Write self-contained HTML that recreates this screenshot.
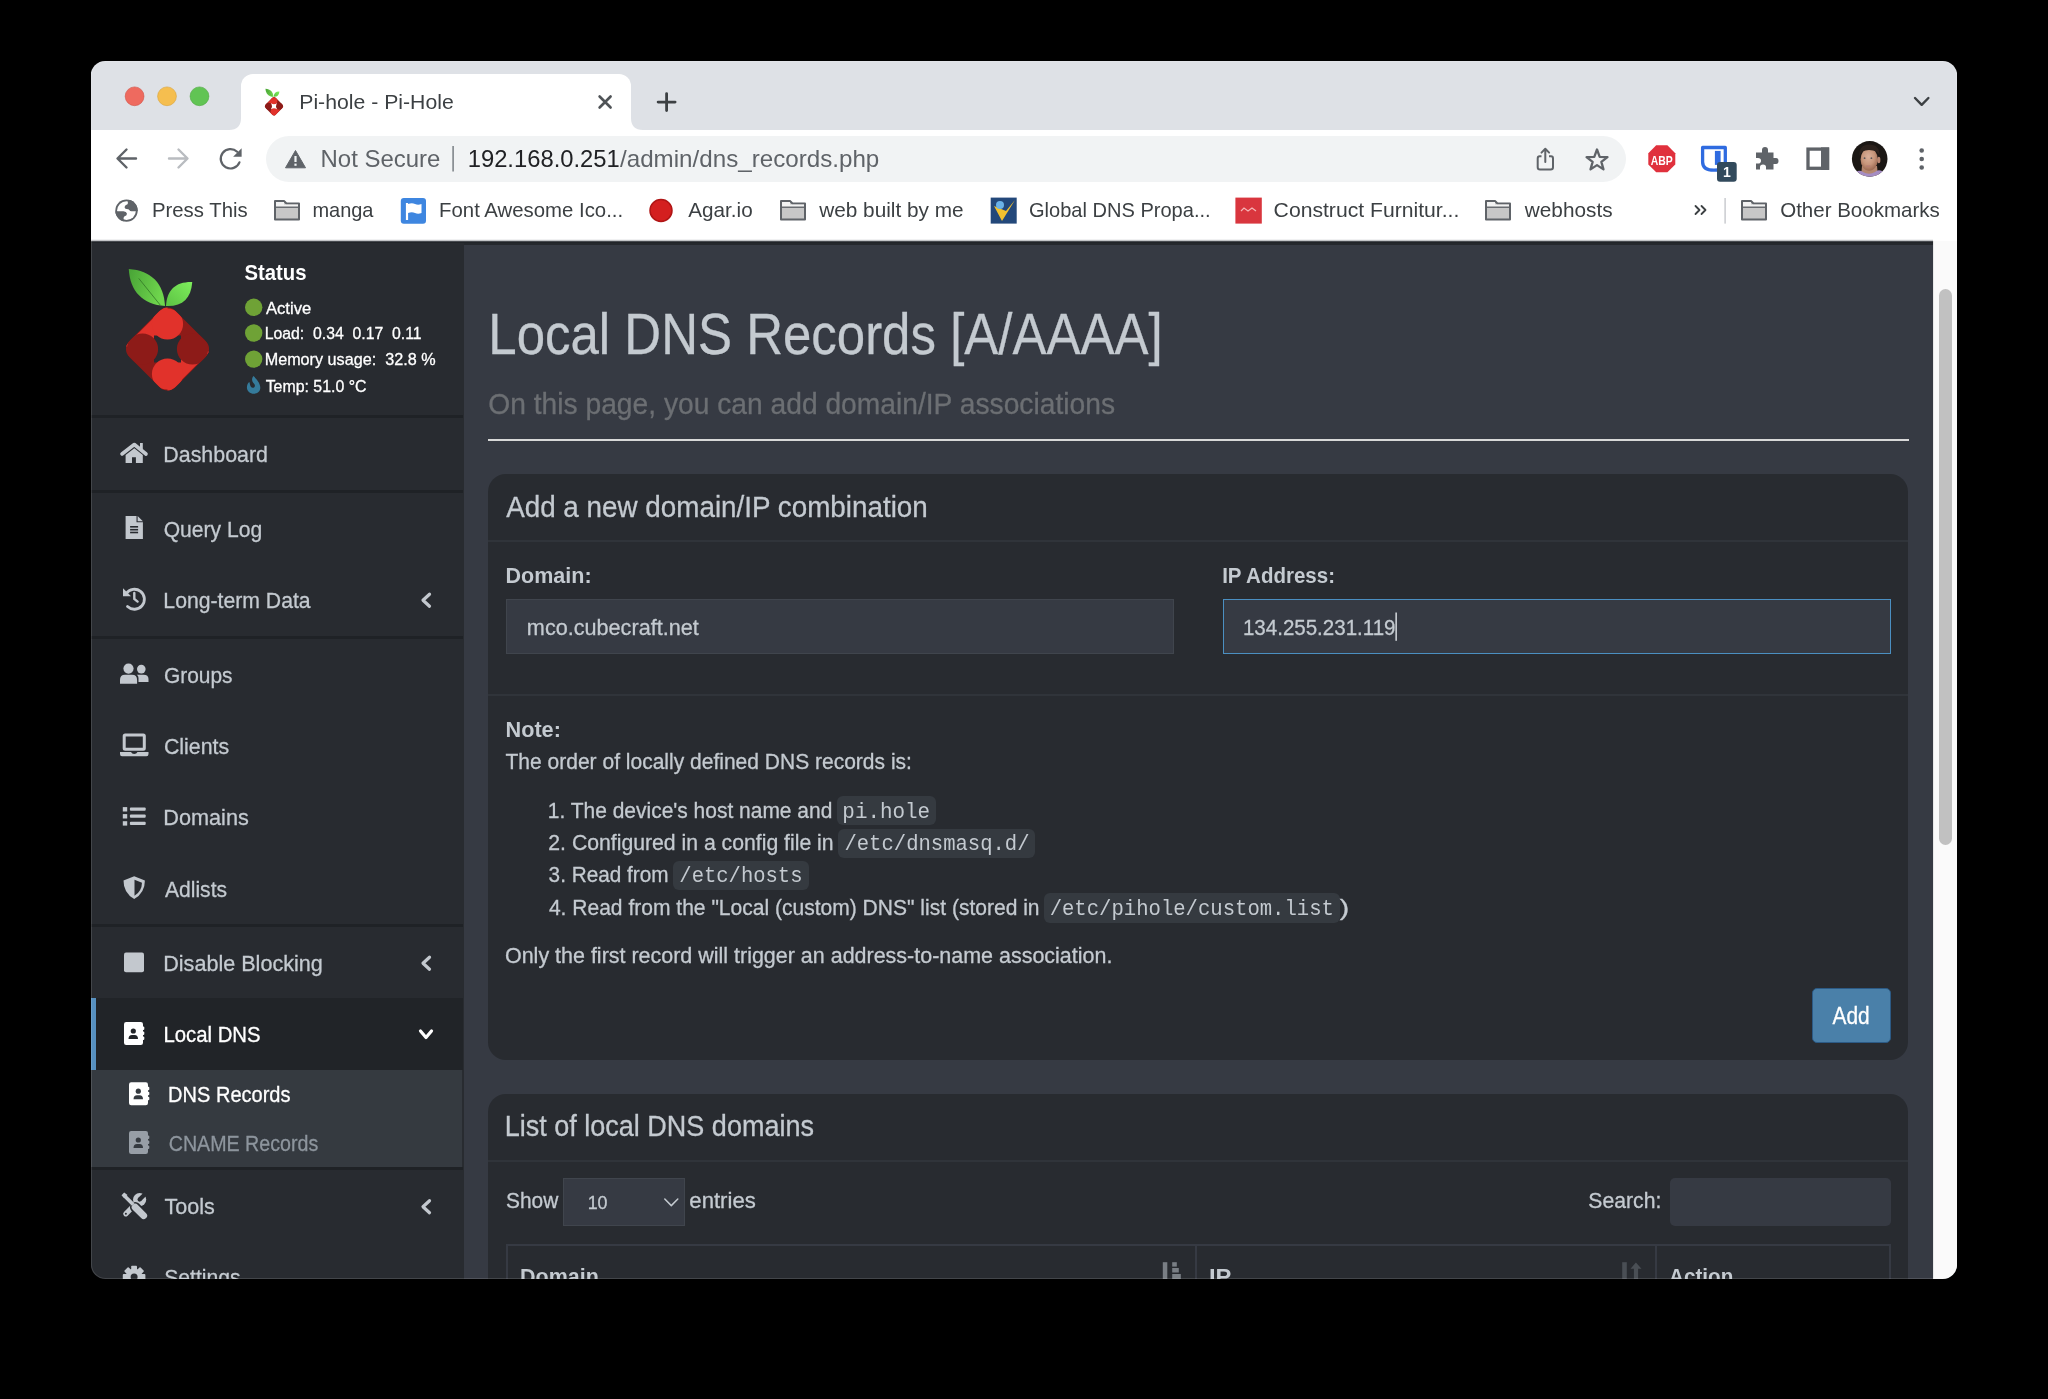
<!DOCTYPE html>
<html><head><meta charset="utf-8"><title>Pi-hole - Pi-Hole</title>
<style>
html,body{margin:0;padding:0;width:2048px;height:1399px;overflow:hidden;background:#000;}
#win{position:absolute;left:91px;top:61px;width:1866px;height:1218px;border-radius:12px;overflow:hidden;}
#stage{position:absolute;left:0;top:0;width:2048px;height:1399px;clip-path:inset(61px 90.8px 120px 90.7px round 14.5px);}
#stage>div{position:absolute;}
svg{position:absolute;left:0;top:0;will-change:transform;}
</style></head><body>
<div id="stage">
<div style="left:91px;top:61px;width:1866px;height:69px;background:#dee1e6;"></div>
<div style="left:241px;top:74px;width:390px;height:56px;background:#ffffff;border-radius:12px 12px 0 0"></div>
<div style="left:91px;top:130px;width:1866px;height:111px;background:#ffffff;"></div>
<div style="left:266px;top:136px;width:1360px;height:46px;background:#f1f3f4;border-radius:23px"></div>
<div style="left:91px;top:241px;width:1866px;height:1038px;background:#282b30;"></div>
<div style="left:91px;top:241px;width:1842px;height:2px;background:#212428;"></div>
<div style="left:464px;top:243px;width:1469px;height:2.3px;background:#25282d;"></div>
<div style="left:91px;top:239px;width:1842px;height:3px;background:linear-gradient(#ffffff, #d8d9db 45%, #5a5d62 75%, #23262b);"></div>
<div style="left:464px;top:245px;width:1469px;height:1034px;background:#363a43;"></div>
<div style="left:1933px;top:241px;width:24px;height:1038px;background:#fafafa;border-left:1px solid #e8e8e8;box-sizing:border-box"></div>
<div style="left:1939.3px;top:289px;width:13px;height:556px;background:#c1c1c1;border-radius:6.5px"></div>
<div style="left:91px;top:415px;width:372px;height:3px;background:#1f2226;"></div>
<div style="left:91px;top:490px;width:372px;height:3px;background:#1f2226;"></div>
<div style="left:91px;top:636px;width:372px;height:3px;background:#1f2226;"></div>
<div style="left:91px;top:924px;width:372px;height:3px;background:#1f2226;"></div>
<div style="left:91px;top:998px;width:372px;height:72px;background:#212428;"></div>
<div style="left:91px;top:998px;width:5px;height:72px;background:#5690c0;"></div>
<div style="left:91px;top:1070px;width:371px;height:97px;background:#353a40;"></div>
<div style="left:91px;top:1167px;width:372px;height:3px;background:#1f2226;"></div>
<div style="left:488px;top:439px;width:1421px;height:2px;background:#d8d8d8;"></div>
<div style="left:488px;top:474px;width:1420px;height:586px;background:#282b30;border-radius:18px"></div>
<div style="left:488px;top:540px;width:1420px;height:2px;background:#30343a;"></div>
<div style="left:488px;top:694px;width:1420px;height:2px;background:#30343a;"></div>
<div style="left:506px;top:599px;width:668px;height:55px;background:#363a43;border:1px solid #40454d;box-sizing:border-box"></div>
<div style="left:1223px;top:599px;width:668px;height:55px;background:#363a43;border:1.6px solid #4b8fc1;box-sizing:border-box"></div>
<div style="left:837px;top:796.2px;width:99px;height:29.3px;background:#353a40;border-radius:6px"></div>
<div style="left:838.4px;top:829px;width:197px;height:29.3px;background:#353a40;border-radius:6px"></div>
<div style="left:673.3px;top:861px;width:136px;height:29.3px;background:#353a40;border-radius:6px"></div>
<div style="left:1043.6px;top:893.4px;width:296px;height:29.3px;background:#353a40;border-radius:6px"></div>
<div style="left:1812px;top:988px;width:79px;height:55px;background:#4a80a9;border:1.5px solid #2c5a85;box-sizing:border-box;border-radius:5px"></div>
<div style="left:488px;top:1094px;width:1420px;height:400px;background:#282b30;border-radius:18px"></div>
<div style="left:488px;top:1160px;width:1420px;height:2px;background:#30343a;"></div>
<div style="left:563px;top:1178px;width:122px;height:48px;background:#363a43;border:1px solid #40454d;box-sizing:border-box"></div>
<div style="left:1670px;top:1178px;width:221px;height:48px;background:#363a43;border-radius:5px"></div>
<div style="left:506px;top:1244px;width:1385px;height:2px;background:#363a43;"></div>
<div style="left:506px;top:1244px;width:2px;height:60px;background:#363a43;"></div>
<div style="left:1195px;top:1244px;width:2px;height:60px;background:#363a43;"></div>
<div style="left:1655px;top:1244px;width:2px;height:60px;background:#363a43;"></div>
<div style="left:1889px;top:1244px;width:2px;height:60px;background:#363a43;"></div>
<div style="left:91px;top:61px;width:1866px;height:1218px;border-radius:14.5px;box-shadow:inset 0 0 0 1px rgba(255,255,255,0.13);z-index:5"></div>
<svg width="2048" height="1399" viewBox="0 0 2048 1399">
<path d="M229 130 Q241 130 241 118 L241 130 Z" fill="#fff"/>
<path d="M643 130 Q631 130 631 118 L631 130 Z" fill="#fff"/>
<text x="299.26" y="108.8" textLength="154.48" lengthAdjust="spacingAndGlyphs" font-family="Liberation Sans" font-size="20.93" fill="#3c4043" font-weight="400" style="white-space:pre">Pi-hole - Pi-Hole</text>
<text x="320.53" y="167" textLength="119.83" lengthAdjust="spacingAndGlyphs" font-family="Liberation Sans" font-size="23.40" fill="#5f6368" font-weight="400" style="white-space:pre">Not Secure</text>
<text x="467.69" y="167" textLength="152.07" lengthAdjust="spacingAndGlyphs" font-family="Liberation Sans" font-size="23.40" fill="#202124" font-weight="400" style="white-space:pre">192.168.0.251</text>
<text x="620.00" y="167" textLength="259.32" lengthAdjust="spacingAndGlyphs" font-family="Liberation Sans" font-size="23.40" fill="#5f6368" font-weight="400" style="white-space:pre">/admin/dns_records.php</text>
<text x="151.93" y="216.9" textLength="95.71" lengthAdjust="spacingAndGlyphs" font-family="Liberation Sans" font-size="19.99" fill="#3c4043" font-weight="400" style="white-space:pre">Press This</text>
<text x="312.42" y="216.9" textLength="61.08" lengthAdjust="spacingAndGlyphs" font-family="Liberation Sans" font-size="19.99" fill="#3c4043" font-weight="400" style="white-space:pre">manga</text>
<text x="439.08" y="216.9" textLength="184.08" lengthAdjust="spacingAndGlyphs" font-family="Liberation Sans" font-size="19.99" fill="#3c4043" font-weight="400" style="white-space:pre">Font Awesome Ico...</text>
<text x="688.26" y="216.9" textLength="64.41" lengthAdjust="spacingAndGlyphs" font-family="Liberation Sans" font-size="19.99" fill="#3c4043" font-weight="400" style="white-space:pre">Agar.io</text>
<text x="819.23" y="216.9" textLength="144.39" lengthAdjust="spacingAndGlyphs" font-family="Liberation Sans" font-size="19.99" fill="#3c4043" font-weight="400" style="white-space:pre">web built by me</text>
<text x="1028.99" y="216.9" textLength="181.64" lengthAdjust="spacingAndGlyphs" font-family="Liberation Sans" font-size="19.99" fill="#3c4043" font-weight="400" style="white-space:pre">Global DNS Propa...</text>
<text x="1273.63" y="216.9" textLength="185.71" lengthAdjust="spacingAndGlyphs" font-family="Liberation Sans" font-size="19.99" fill="#3c4043" font-weight="400" style="white-space:pre">Construct Furnitur...</text>
<text x="1524.83" y="216.9" textLength="87.72" lengthAdjust="spacingAndGlyphs" font-family="Liberation Sans" font-size="19.99" fill="#3c4043" font-weight="400" style="white-space:pre">webhosts</text>
<text x="1780.23" y="216.9" textLength="159.51" lengthAdjust="spacingAndGlyphs" font-family="Liberation Sans" font-size="19.99" fill="#3c4043" font-weight="400" style="white-space:pre">Other Bookmarks</text>
<text x="244.42" y="280.4" textLength="62.02" lengthAdjust="spacingAndGlyphs" font-family="Liberation Sans" font-size="21.80" fill="#ffffff" font-weight="700" style="white-space:pre">Status</text>
<text x="265.97" y="313.5" textLength="45.27" lengthAdjust="spacingAndGlyphs" font-family="Liberation Sans" font-size="16.35" fill="#ffffff" font-weight="400" stroke="#ffffff" stroke-width="0.3" style="white-space:pre">Active</text>
<text x="264.70" y="339.4" textLength="156.87" lengthAdjust="spacingAndGlyphs" font-family="Liberation Sans" font-size="16.35" fill="#ffffff" font-weight="400" stroke="#ffffff" stroke-width="0.3" style="white-space:pre">Load:  0.34  0.17  0.11</text>
<text x="264.67" y="364.8" textLength="170.91" lengthAdjust="spacingAndGlyphs" font-family="Liberation Sans" font-size="16.35" fill="#ffffff" font-weight="400" stroke="#ffffff" stroke-width="0.3" style="white-space:pre">Memory usage:  32.8 %</text>
<text x="265.64" y="391.8" textLength="100.96" lengthAdjust="spacingAndGlyphs" font-family="Liberation Sans" font-size="16.35" fill="#ffffff" font-weight="400" stroke="#ffffff" stroke-width="0.3" style="white-space:pre">Temp: 51.0 °C</text>
<text x="163.34" y="462.3" textLength="104.63" lengthAdjust="spacingAndGlyphs" font-family="Liberation Sans" font-size="22.53" fill="#c4cad0" font-weight="400" stroke="#c4cad0" stroke-width="0.3" style="white-space:pre">Dashboard</text>
<text x="163.70" y="536.9" textLength="98.46" lengthAdjust="spacingAndGlyphs" font-family="Liberation Sans" font-size="22.53" fill="#c4cad0" font-weight="400" stroke="#c4cad0" stroke-width="0.3" style="white-space:pre">Query Log</text>
<text x="163.36" y="608.1" textLength="147.24" lengthAdjust="spacingAndGlyphs" font-family="Liberation Sans" font-size="22.53" fill="#c4cad0" font-weight="400" stroke="#c4cad0" stroke-width="0.3" style="white-space:pre">Long-term Data</text>
<text x="163.95" y="682.7" textLength="68.61" lengthAdjust="spacingAndGlyphs" font-family="Liberation Sans" font-size="22.53" fill="#c4cad0" font-weight="400" stroke="#c4cad0" stroke-width="0.3" style="white-space:pre">Groups</text>
<text x="163.92" y="754" textLength="65.26" lengthAdjust="spacingAndGlyphs" font-family="Liberation Sans" font-size="22.53" fill="#c4cad0" font-weight="400" stroke="#c4cad0" stroke-width="0.3" style="white-space:pre">Clients</text>
<text x="163.22" y="825.2" textLength="85.56" lengthAdjust="spacingAndGlyphs" font-family="Liberation Sans" font-size="22.53" fill="#c4cad0" font-weight="400" stroke="#c4cad0" stroke-width="0.3" style="white-space:pre">Domains</text>
<text x="164.96" y="896.6" textLength="62.10" lengthAdjust="spacingAndGlyphs" font-family="Liberation Sans" font-size="22.53" fill="#c4cad0" font-weight="400" stroke="#c4cad0" stroke-width="0.3" style="white-space:pre">Adlists</text>
<text x="163.23" y="971.4" textLength="159.56" lengthAdjust="spacingAndGlyphs" font-family="Liberation Sans" font-size="22.53" fill="#c4cad0" font-weight="400" stroke="#c4cad0" stroke-width="0.3" style="white-space:pre">Disable Blocking</text>
<text x="163.43" y="1042.1" textLength="97.20" lengthAdjust="spacingAndGlyphs" font-family="Liberation Sans" font-size="22.53" fill="#ffffff" font-weight="400" stroke="#ffffff" stroke-width="0.3" style="white-space:pre">Local DNS</text>
<text x="168.06" y="1102" textLength="122.47" lengthAdjust="spacingAndGlyphs" font-family="Liberation Sans" font-size="22.53" fill="#ffffff" font-weight="400" stroke="#ffffff" stroke-width="0.3" style="white-space:pre">DNS Records</text>
<text x="168.70" y="1150.9" textLength="149.61" lengthAdjust="spacingAndGlyphs" font-family="Liberation Sans" font-size="22.53" fill="#8d959d" font-weight="400" stroke="#8d959d" stroke-width="0.3" style="white-space:pre">CNAME Records</text>
<text x="164.52" y="1214.1" textLength="50.26" lengthAdjust="spacingAndGlyphs" font-family="Liberation Sans" font-size="22.53" fill="#c4cad0" font-weight="400" stroke="#c4cad0" stroke-width="0.3" style="white-space:pre">Tools</text>
<text x="164.14" y="1284.5" textLength="76.53" lengthAdjust="spacingAndGlyphs" font-family="Liberation Sans" font-size="22.53" fill="#c4cad0" font-weight="400" stroke="#c4cad0" stroke-width="0.3" style="white-space:pre">Settings</text>
<text x="488.32" y="353.9" textLength="674.32" lengthAdjust="spacingAndGlyphs" font-family="Liberation Sans" font-size="56.98" fill="#c4cad0" font-weight="400" stroke="#c4cad0" stroke-width="0.3" style="white-space:pre">Local DNS Records [A/AAAA]</text>
<text x="488.26" y="414.2" textLength="626.76" lengthAdjust="spacingAndGlyphs" font-family="Liberation Sans" font-size="29.51" fill="#6c6f73" font-weight="400" stroke="#6c6f73" stroke-width="0.3" style="white-space:pre">On this page, you can add domain/IP associations</text>
<text x="506.15" y="516.8" textLength="421.66" lengthAdjust="spacingAndGlyphs" font-family="Liberation Sans" font-size="28.78" fill="#c4cad0" font-weight="400" stroke="#c4cad0" stroke-width="0.3" style="white-space:pre">Add a new domain/IP combination</text>
<text x="505.56" y="583.2" textLength="86.01" lengthAdjust="spacingAndGlyphs" font-family="Liberation Sans" font-size="21.66" fill="#c4cad0" font-weight="700" style="white-space:pre">Domain:</text>
<text x="1222.13" y="583.4" textLength="112.85" lengthAdjust="spacingAndGlyphs" font-family="Liberation Sans" font-size="21.66" fill="#c4cad0" font-weight="700" style="white-space:pre">IP Address:</text>
<text x="526.86" y="634.8" textLength="171.90" lengthAdjust="spacingAndGlyphs" font-family="Liberation Sans" font-size="22.38" fill="#c4cad0" font-weight="400" stroke="#c4cad0" stroke-width="0.3" style="white-space:pre">mco.cubecraft.net</text>
<text x="1242.94" y="634.8" textLength="152.54" lengthAdjust="spacingAndGlyphs" font-family="Liberation Sans" font-size="22.09" fill="#c4cad0" font-weight="400" stroke="#c4cad0" stroke-width="0.3" style="white-space:pre">134.255.231.119</text>
<text x="505.55" y="736.9" textLength="55.33" lengthAdjust="spacingAndGlyphs" font-family="Liberation Sans" font-size="21.66" fill="#c4cad0" font-weight="700" style="white-space:pre">Note:</text>
<text x="505.53" y="769.4" textLength="406.39" lengthAdjust="spacingAndGlyphs" font-family="Liberation Sans" font-size="21.37" fill="#c4cad0" font-weight="400" stroke="#c4cad0" stroke-width="0.3" style="white-space:pre">The order of locally defined DNS records is:</text>
<text x="547.80" y="818.2" textLength="284.55" lengthAdjust="spacingAndGlyphs" font-family="Liberation Sans" font-size="21.37" fill="#c4cad0" font-weight="400" stroke="#c4cad0" stroke-width="0.3" style="white-space:pre">1. The device&#x27;s host name and</text>
<text x="548.33" y="850.2" textLength="285.24" lengthAdjust="spacingAndGlyphs" font-family="Liberation Sans" font-size="21.37" fill="#c4cad0" font-weight="400" stroke="#c4cad0" stroke-width="0.3" style="white-space:pre">2. Configured in a config file in</text>
<text x="548.61" y="882.4" textLength="119.86" lengthAdjust="spacingAndGlyphs" font-family="Liberation Sans" font-size="21.37" fill="#c4cad0" font-weight="400" stroke="#c4cad0" stroke-width="0.3" style="white-space:pre">3. Read from</text>
<text x="548.92" y="914.6" textLength="490.65" lengthAdjust="spacingAndGlyphs" font-family="Liberation Sans" font-size="21.37" fill="#c4cad0" font-weight="400" stroke="#c4cad0" stroke-width="0.3" style="white-space:pre">4. Read from the &quot;Local (custom) DNS&quot; list (stored in</text>
<text x="504.98" y="963.4" textLength="607.38" lengthAdjust="spacingAndGlyphs" font-family="Liberation Sans" font-size="21.37" fill="#c4cad0" font-weight="400" stroke="#c4cad0" stroke-width="0.3" style="white-space:pre">Only the first record will trigger an address-to-name association.</text>
<text x="842.37" y="818.2" textLength="87.70" lengthAdjust="spacingAndGlyphs" font-family="Liberation Mono" font-size="22.76" fill="#c4cad0" font-weight="400" style="white-space:pre">pi.hole</text>
<text x="844.45" y="850.2" textLength="185.11" lengthAdjust="spacingAndGlyphs" font-family="Liberation Mono" font-size="22.76" fill="#c4cad0" font-weight="400" style="white-space:pre">/etc/dnsmasq.d/</text>
<text x="679.36" y="882.4" textLength="123.14" lengthAdjust="spacingAndGlyphs" font-family="Liberation Mono" font-size="22.76" fill="#c4cad0" font-weight="400" style="white-space:pre">/etc/hosts</text>
<text x="1049.65" y="914.6" textLength="284.28" lengthAdjust="spacingAndGlyphs" font-family="Liberation Mono" font-size="22.76" fill="#c4cad0" font-weight="400" style="white-space:pre">/etc/pihole/custom.list</text>
<text x="1339.83" y="914.6" textLength="9.42" lengthAdjust="spacingAndGlyphs" font-family="Liberation Sans" font-size="21.37" fill="#c4cad0" font-weight="400" stroke="#c4cad0" stroke-width="0.3" style="white-space:pre">)</text>
<text x="1832.46" y="1024" textLength="37.19" lengthAdjust="spacingAndGlyphs" font-family="Liberation Sans" font-size="24.42" fill="#ffffff" font-weight="400" stroke="#ffffff" stroke-width="0.3" style="white-space:pre">Add</text>
<text x="504.78" y="1136.3" textLength="309.19" lengthAdjust="spacingAndGlyphs" font-family="Liberation Sans" font-size="28.78" fill="#c4cad0" font-weight="400" stroke="#c4cad0" stroke-width="0.3" style="white-space:pre">List of local DNS domains</text>
<text x="506.05" y="1208" textLength="52.30" lengthAdjust="spacingAndGlyphs" font-family="Liberation Sans" font-size="21.37" fill="#c4cad0" font-weight="400" stroke="#c4cad0" stroke-width="0.3" style="white-space:pre">Show</text>
<text x="587.64" y="1209.2" textLength="19.86" lengthAdjust="spacingAndGlyphs" font-family="Liberation Sans" font-size="18.90" fill="#c4cad0" font-weight="400" stroke="#c4cad0" stroke-width="0.3" style="white-space:pre">10</text>
<text x="689.36" y="1208" textLength="66.44" lengthAdjust="spacingAndGlyphs" font-family="Liberation Sans" font-size="21.37" fill="#c4cad0" font-weight="400" stroke="#c4cad0" stroke-width="0.3" style="white-space:pre">entries</text>
<text x="1588.34" y="1208.4" textLength="73.00" lengthAdjust="spacingAndGlyphs" font-family="Liberation Sans" font-size="21.37" fill="#c4cad0" font-weight="400" stroke="#c4cad0" stroke-width="0.3" style="white-space:pre">Search:</text>
<text x="520.06" y="1283.5" textLength="78.77" lengthAdjust="spacingAndGlyphs" font-family="Liberation Sans" font-size="21.66" fill="#c4cad0" font-weight="700" style="white-space:pre">Domain</text>
<text x="1208.91" y="1283.5" textLength="22.40" lengthAdjust="spacingAndGlyphs" font-family="Liberation Sans" font-size="21.66" fill="#c4cad0" font-weight="700" style="white-space:pre">IP</text>
<text x="1668.98" y="1283.5" textLength="64.30" lengthAdjust="spacingAndGlyphs" font-family="Liberation Sans" font-size="21.66" fill="#c4cad0" font-weight="700" style="white-space:pre">Action</text>
<circle cx="134.6" cy="96.3" r="9.4" fill="#ee6a5f" stroke="#d25144" stroke-width="0.6"/>
<circle cx="167" cy="96.3" r="9.4" fill="#f5be4f" stroke="#d9a33a" stroke-width="0.6"/>
<circle cx="199.5" cy="96.3" r="9.4" fill="#61c454" stroke="#4ea83f" stroke-width="0.6"/>
<path d="M599.6 96.5 L610.6 107.5 M610.6 96.5 L599.6 107.5" stroke="#4f5357" stroke-width="2.6" stroke-linecap="round"/>
<path d="M666.6 93.6 L666.6 110.6 M658.1 102.1 L675.1 102.1" stroke="#3c4043" stroke-width="2.8" stroke-linecap="round"/>
<path d="M1915 98 L1921.7 104.8 L1928.4 98" fill="none" stroke="#3c4043" stroke-width="2.4" stroke-linecap="round" stroke-linejoin="round"/>
<path d="M136 158.5 L118 158.5 M126.5 149.5 L117.5 158.5 L126.5 167.5" fill="none" stroke="#5f6368" stroke-width="2.4" stroke-linecap="round" stroke-linejoin="round"/>
<path d="M169 158.5 L187 158.5 M178.5 149.5 L187.5 158.5 L178.5 167.5" fill="none" stroke="#b9bcc0" stroke-width="2.4" stroke-linecap="round" stroke-linejoin="round"/>
<path d="M237.14 151.72 A9.7 9.7 0 1 0 239.46 162.36" fill="none" stroke="#5f6368" stroke-width="2.2" stroke-linecap="round"/>
<path d="M241.6 148.3 L241.6 156.8 L233.1 156.8 Z" fill="#5f6368"/>
<path d="M295.5 150.5 L305.5 167.8 L285.5 167.8 Z" fill="#5f6368" stroke="#5f6368" stroke-width="1" stroke-linejoin="round"/>
<rect x="294.4" y="156" width="2.2" height="6" fill="#f1f3f4"/><rect x="294.4" y="163.6" width="2.2" height="2.2" fill="#f1f3f4"/>
<rect x="452.3" y="146" width="1.6" height="25.5" fill="#80868b"/>
<path d="M1541.5 156.3 L1539.7 156.3 Q1537.7 156.3 1537.7 158.5 L1537.7 167.3 Q1537.7 169.5 1540 169.5 L1550.7 169.5 Q1553 169.5 1553 167.3 L1553 158.5 Q1553 156.3 1551 156.3 L1549 156.3" fill="none" stroke="#5f6368" stroke-width="2" stroke-linejoin="round"/>
<path d="M1545.3 162 L1545.3 149.2 M1541.5 152.6 L1545.3 148.8 L1549.1 152.6" fill="none" stroke="#5f6368" stroke-width="2" stroke-linecap="round" stroke-linejoin="round"/>
<polygon points="1597.00,149.50 1599.70,156.78 1607.46,157.10 1601.37,161.92 1603.47,169.40 1597.00,165.10 1590.53,169.40 1592.63,161.92 1586.54,157.10 1594.30,156.78" fill="none" stroke="#5f6368" stroke-width="2.3" stroke-linejoin="round"/>
<polygon points="1675.29,164.39 1667.39,172.29 1656.21,172.29 1648.31,164.39 1648.31,153.21 1656.21,145.31 1667.39,145.31 1675.29,153.21" fill="#e0313d"/>
<text x="1661.8" y="164.5" text-anchor="middle" font-family="Liberation Sans" font-weight="700" font-size="13" fill="#fff" textLength="22" lengthAdjust="spacingAndGlyphs">ABP</text>
<path d="M1702.6 147.5 L1725.3 147.5 L1725.3 162 Q1725.3 170.2 1714 170.2 Q1702.6 170.2 1702.6 162 Z" fill="none" stroke="#2f6be0" stroke-width="3.3" stroke-linejoin="round"/>
<rect x="1714.9" y="150.9" width="5.7" height="14" fill="#2f6be0"/>
<rect x="1717" y="162" width="19.7" height="19.7" rx="3" fill="#324a5c"/>
<text x="1726.8" y="177" text-anchor="middle" font-family="Liberation Sans" font-weight="700" font-size="14" fill="#fff">1</text>
<path d="M1756 152.5 L1762 152.5 L1762 150 Q1762 147 1765 147 Q1768 147 1768 150 L1768 152.5 L1773.5 152.5 L1773.5 158 L1776 158 Q1778.5 158 1778.5 161 Q1778.5 164 1776 164 L1773.5 164 L1773.5 169.5 L1766 169.5 L1766 167 Q1766 164.5 1763 164.5 Q1760 164.5 1760 167 L1760 169.5 L1756 169.5 L1756 163.5 L1758 163.5 Q1761 163.5 1761 160.7 Q1761 158 1758 158 L1756 158 Z" fill="#5f6368"/>
<rect x="1808" y="149.1" width="19.5" height="19.2" fill="none" stroke="#5f6368" stroke-width="3.3"/>
<rect x="1821" y="147.4" width="8.2" height="22.5" fill="#5f6368"/>
<defs><clipPath id="avc"><circle cx="1869.7" cy="158.85" r="17.8"/></clipPath><radialGradient id="avf" cx="0.45" cy="0.38" r="0.6"><stop offset="0" stop-color="#dbb19b"/><stop offset="0.6" stop-color="#c6957a"/><stop offset="1" stop-color="#9e6c55"/></radialGradient></defs>
<circle cx="1869.7" cy="158.85" r="17.8" fill="#1b1714"/>
<g clip-path="url(#avc)"><path d="M1862 166 L1877 166 L1878 176 L1861 176 Z" fill="#b4876f"/><path d="M1850 182 L1855 172 Q1860 169.5 1863 172 Q1869 175.5 1875 172 Q1878 169 1882 171 L1890 176 L1890 182 Z" fill="#a58dc3"/><ellipse cx="1869.2" cy="159.5" rx="8.6" ry="11.2" fill="url(#avf)"/><ellipse cx="1878.8" cy="160" rx="1.6" ry="3.2" fill="#b98670"/><path d="M1859.5 156 Q1858.5 145 1869 144.5 Q1880 144.5 1879.5 156 Q1878 150 1869 150 Q1861 150 1859.5 156 Z" fill="#2b211c"/><circle cx="1864.6" cy="158.2" r="0.9" fill="#5a5658"/><circle cx="1871.4" cy="158.2" r="0.9" fill="#5a5658"/><rect x="1866" y="165.5" width="4.6" height="1.3" rx="0.6" fill="#b47c74"/></g>
<circle cx="1921.7" cy="150.5" r="2.3" fill="#5f6368"/>
<circle cx="1921.7" cy="159" r="2.3" fill="#5f6368"/>
<circle cx="1921.7" cy="167.5" r="2.3" fill="#5f6368"/>
<defs><clipPath id="glc"><circle cx="126.5" cy="210.6" r="11.2"/></clipPath></defs>
<circle cx="126.5" cy="210.6" r="11.2" fill="#5f6368"/><circle cx="126.5" cy="210.6" r="9.4" fill="#fff"/>
<g clip-path="url(#glc)" fill="#5f6368"><path d="M127.85 200 L127.85 203 Q128 204.5 126.5 204.8 Q124.6 205.5 124.6 207.3 Q124.6 209 126.5 209 Q128.8 209 129.3 210 Q129.8 211.2 131.5 211.2 L140 211.2 L140 198 Z"/><path d="M112 211.2 L123.5 211.2 Q126.5 211.4 126.9 213.5 Q127 215.5 125.2 216 Q123.6 216.4 123.6 218 L123.6 226 L112 226 Z"/></g>
<path d="M275 201 L284 201 L286.5 203.5 L299 203.5 L299 219.5 L275 219.5 Z" fill="#c7c7c7" stroke="#5f6368" stroke-width="2" stroke-linejoin="round"/><path d="M275 207 L299 207" stroke="#5f6368" stroke-width="1.8"/><rect x="276" y="202" width="8" height="4" fill="#f2f2f2"/><rect x="276" y="204.5" width="22" height="2" fill="#f2f2f2"/>
<path d="M781 201 L790 201 L792.5 203.5 L805 203.5 L805 219.5 L781 219.5 Z" fill="#c7c7c7" stroke="#5f6368" stroke-width="2" stroke-linejoin="round"/><path d="M781 207 L805 207" stroke="#5f6368" stroke-width="1.8"/><rect x="782" y="202" width="8" height="4" fill="#f2f2f2"/><rect x="782" y="204.5" width="22" height="2" fill="#f2f2f2"/>
<path d="M1486 201 L1495 201 L1497.5 203.5 L1510 203.5 L1510 219.5 L1486 219.5 Z" fill="#c7c7c7" stroke="#5f6368" stroke-width="2" stroke-linejoin="round"/><path d="M1486 207 L1510 207" stroke="#5f6368" stroke-width="1.8"/><rect x="1487" y="202" width="8" height="4" fill="#f2f2f2"/><rect x="1487" y="204.5" width="22" height="2" fill="#f2f2f2"/>
<path d="M1742 201 L1751 201 L1753.5 203.5 L1766 203.5 L1766 219.5 L1742 219.5 Z" fill="#c7c7c7" stroke="#5f6368" stroke-width="2" stroke-linejoin="round"/><path d="M1742 207 L1766 207" stroke="#5f6368" stroke-width="1.8"/><rect x="1743" y="202" width="8" height="4" fill="#f2f2f2"/><rect x="1743" y="204.5" width="22" height="2" fill="#f2f2f2"/>
<rect x="400.8" y="198" width="25.2" height="25.7" rx="3" fill="#3e86e0"/>
<path d="M407 203 L407 220" stroke="#fff" stroke-width="2.2"/><path d="M408 204 Q412 202.5 415 204 Q418 205.5 421.5 204 L421.5 213 Q418 214.5 415 213 Q412 211.5 408 213 Z" fill="#fff"/>
<circle cx="661" cy="210.5" r="11" fill="#d41f1f" stroke="#b01515" stroke-width="1.5"/>
<rect x="990.7" y="197.6" width="26" height="26" fill="#23487a"/>
<path d="M994 206 L1002 221 L1015 200 L1006 211 Z" fill="#f2c12e"/><circle cx="1000" cy="205" r="4" fill="#6bb3e8"/>
<rect x="1235.4" y="197.6" width="26.4" height="26" fill="#d9363e"/>
<path d="M1241 211 L1244 208 L1248 211 L1252 208 L1256 211" fill="none" stroke="#f5b5b5" stroke-width="1.2"/>
<path d="M1695.5 206 L1699.5 210 L1695.5 214 M1701.5 206 L1705.5 210 L1701.5 214" fill="none" stroke="#3c4043" stroke-width="1.8" stroke-linecap="round" stroke-linejoin="round"/>
<rect x="1724.4" y="198" width="1.4" height="25.6" fill="#c6c8cc"/>
<g transform="translate(274,106.3) scale(0.22)">
<defs>
<clipPath id="dcfav"><rect x="-32.6" y="-32.6" width="65.2" height="65.2" rx="11" transform="rotate(45)"/></clipPath>
<linearGradient id="lgfav" x1="0" y1="0" x2="1" y2="0.3"><stop offset="0" stop-color="#48a336"/><stop offset="1" stop-color="#6fd54d"/></linearGradient>
<linearGradient id="lhfav" x1="0" y1="1" x2="1" y2="0"><stop offset="0" stop-color="#5cc243"/><stop offset="1" stop-color="#7eee5c"/></linearGradient>
</defs>
<path d="M-38.75 -80 C -16.25 -78.4 -3.65 -65.6 -2.5 -43 C -24.85 -44.6 -37.45 -57.4 -38.75 -80 Z" fill="url(#lgfav)"/>
<path d="M-28.75 -70.6 L-7.3 -44" stroke="#2e6f25" stroke-width="0.9" opacity="0.8"/>
<path d="M24.75 -67 C 23.65 -50.4 14.85 -42.3 -1.5 -43 C -0.65 -59.3 8.15 -67.4 24.75 -67 Z" fill="url(#lhfav)"/>
<g clip-path="url(#dcfav)">
<rect x="-45" y="-45" width="90" height="90" fill="#8d1b18"/>
<path d="M0 -45 L-42 -3 L-36 0 L0 0 Z" fill="#e1322b"/>
<path d="M0 45 L42 3 L36 0 L0 0 Z" fill="#e1322b"/>
<rect x="-13.5" y="-13.5" width="27" height="27" fill="#ffffff"/>
<circle cx="0" cy="-25" r="15.6" fill="#e1322b"/>
<circle cx="0" cy="25" r="15.6" fill="#e1322b"/>
<circle cx="-25" cy="0" r="15.6" fill="#8d1b18"/>
<circle cx="25" cy="0" r="15.6" fill="#8d1b18"/>
</g></g>
<g transform="translate(167.5,349) scale(1.0)">
<defs>
<clipPath id="dcmain"><rect x="-32.6" y="-32.6" width="65.2" height="65.2" rx="11" transform="rotate(45)"/></clipPath>
<linearGradient id="lgmain" x1="0" y1="0" x2="1" y2="0.3"><stop offset="0" stop-color="#48a336"/><stop offset="1" stop-color="#6fd54d"/></linearGradient>
<linearGradient id="lhmain" x1="0" y1="1" x2="1" y2="0"><stop offset="0" stop-color="#5cc243"/><stop offset="1" stop-color="#7eee5c"/></linearGradient>
</defs>
<path d="M-38.75 -80 C -16.25 -78.4 -3.65 -65.6 -2.5 -43 C -24.85 -44.6 -37.45 -57.4 -38.75 -80 Z" fill="url(#lgmain)"/>
<path d="M-28.75 -70.6 L-7.3 -44" stroke="#2e6f25" stroke-width="0.9" opacity="0.8"/>
<path d="M24.75 -67 C 23.65 -50.4 14.85 -42.3 -1.5 -43 C -0.65 -59.3 8.15 -67.4 24.75 -67 Z" fill="url(#lhmain)"/>
<g clip-path="url(#dcmain)">
<rect x="-45" y="-45" width="90" height="90" fill="#8d1b18"/>
<path d="M0 -45 L-42 -3 L-36 0 L0 0 Z" fill="#e1322b"/>
<path d="M0 45 L42 3 L36 0 L0 0 Z" fill="#e1322b"/>
<rect x="-13.5" y="-13.5" width="27" height="27" fill="#282b30"/>
<circle cx="0" cy="-25" r="15.6" fill="#e1322b"/>
<circle cx="0" cy="25" r="15.6" fill="#e1322b"/>
<circle cx="-25" cy="0" r="15.6" fill="#8d1b18"/>
<circle cx="25" cy="0" r="15.6" fill="#8d1b18"/>
</g></g>
<path d="M122 454 L134.3 444.5 L146 454" fill="none" stroke="#c3c8ce" stroke-width="3.6" stroke-linecap="round" stroke-linejoin="round"/>
<rect x="140" y="443" width="2.8" height="6" fill="#c3c8ce"/>
<path d="M125.6 455 L134.3 448.2 L142.8 455 L142.8 463 L135.9 463 L135.9 457.3 L132 457.3 L132 463 L125.6 463 Z" fill="#c3c8ce"/>
<path d="M125.6 516.1 L136.5 516.1 L136.5 522.3 L142.9 522.3 L142.9 538.9 L125.6 538.9 Z" fill="#c3c8ce"/>
<path d="M137.6 516.1 L142.9 521.3 L137.6 521.3 Z" fill="#c3c8ce"/>
<rect x="130.1" y="526.0" width="8" height="1.6" fill="#282b30"/>
<rect x="130.1" y="528.9000000000001" width="8" height="1.6" fill="#282b30"/>
<rect x="130.1" y="531.7" width="8" height="1.6" fill="#282b30"/>
<path d="M126.2 593.5 A10 10 0 1 1 127.5 606.5" fill="none" stroke="#c3c8ce" stroke-width="2.8" stroke-linecap="round"/>
<path d="M123 588.3 L123 596.3 L131 596.3 Z" fill="#c3c8ce"/>
<path d="M134.3 593 L134.3 599 L137.6 601.6" fill="none" stroke="#c3c8ce" stroke-width="2.4" stroke-linecap="round"/>
<circle cx="128.5" cy="668.6" r="5.1" fill="#c3c8ce"/>
<path d="M120 683.8 L120 680 Q120 674.7 125 674.7 L132 674.7 Q137.1 674.7 137.1 680 L137.1 683.8 Z" fill="#c3c8ce"/>
<circle cx="141.3" cy="669.1" r="4.3" fill="#c3c8ce"/>
<path d="M138.5 682.1 L138.5 678 Q138.5 675.5 136.8 674.7 L143.5 674.7 Q148.5 674.7 148.5 679 L148.5 682.1 Z" fill="#c3c8ce"/>
<rect x="124.2" y="735" width="20.1" height="14.3" rx="1" fill="none" stroke="#c3c8ce" stroke-width="3"/>
<path d="M120 752 L131 752 Q132 754 134.2 754 Q136.5 754 137.5 752 L148.5 752 L148.5 754 Q148.5 756.2 146.5 756.2 L122 756.2 Q120 756.2 120 754 Z" fill="#c3c8ce"/>
<rect x="122.8" y="807.1" width="4.4" height="4.4" fill="#c3c8ce"/>
<rect x="122.8" y="814.1" width="4.4" height="4.4" fill="#c3c8ce"/>
<rect x="122.8" y="821.2" width="4.4" height="4.4" fill="#c3c8ce"/>
<rect x="129.9" y="807.6" width="15.8" height="3.2" rx="1" fill="#c3c8ce"/>
<rect x="129.9" y="814.5" width="15.8" height="3.2" rx="1" fill="#c3c8ce"/>
<rect x="129.9" y="821.6999999999999" width="15.8" height="3.2" rx="1" fill="#c3c8ce"/>
<path d="M134.2 876.2 L144.9 880.6 Q145 893 134.2 899.1 Q123.4 893 123.5 880.6 Z" fill="#c3c8ce"/>
<path d="M134.5 879.7 L142 882.8 Q141.8 891.5 134.5 895.8 Z" fill="#282b30"/>
<rect x="124" y="952.5" width="20" height="19.7" rx="2" fill="#c3c8ce"/>
<rect x="124" y="1022" width="19" height="23" rx="2.2" fill="#ffffff"/><rect x="142" y="1026.5" width="2.3" height="3.5" rx="1" fill="#ffffff"/><rect x="142" y="1031.5" width="2.3" height="3.5" rx="1" fill="#ffffff"/><rect x="142" y="1036.5" width="2.3" height="3.5" rx="1" fill="#ffffff"/><circle cx="133.3" cy="1031" r="2.6" fill="#212428"/><path d="M128.5 1039 Q128.5 1035 132 1035 L134.6 1035 Q138 1035 138 1039 Z" fill="#212428"/>
<rect x="129" y="1082.2" width="19" height="23" rx="2.2" fill="#ffffff"/><rect x="147" y="1086.7" width="2.3" height="3.5" rx="1" fill="#ffffff"/><rect x="147" y="1091.7" width="2.3" height="3.5" rx="1" fill="#ffffff"/><rect x="147" y="1096.7" width="2.3" height="3.5" rx="1" fill="#ffffff"/><circle cx="138.3" cy="1091.2" r="2.6" fill="#353a40"/><path d="M133.5 1099.2 Q133.5 1095.2 137 1095.2 L139.6 1095.2 Q143 1095.2 143 1099.2 Z" fill="#353a40"/>
<rect x="129" y="1131" width="19" height="23" rx="2.2" fill="#979ea6"/><rect x="147" y="1135.5" width="2.3" height="3.5" rx="1" fill="#979ea6"/><rect x="147" y="1140.5" width="2.3" height="3.5" rx="1" fill="#979ea6"/><rect x="147" y="1145.5" width="2.3" height="3.5" rx="1" fill="#979ea6"/><circle cx="138.3" cy="1140" r="2.6" fill="#353a40"/><path d="M133.5 1148 Q133.5 1144 137 1144 L139.6 1144 Q143 1144 143 1148 Z" fill="#353a40"/>
<path d="M125.8 1213.8 L137.5 1202" stroke="#c3c8ce" stroke-width="5.2" stroke-linecap="round"/>
<circle cx="139.6" cy="1199.6" r="6.6" fill="#c3c8ce"/>
<path d="M139.6 1199.6 L147 1192.2" stroke="#282b30" stroke-width="4.2" stroke-linecap="butt"/>
<circle cx="139.6" cy="1199.6" r="2.1" fill="#282b30"/>
<circle cx="125.9" cy="1213.7" r="1" fill="#282b30"/>
<path d="M135.2 1207.2 L143.6 1215.6" stroke="#282b30" stroke-width="10.5" stroke-linecap="round"/>
<path d="M122.6 1196.5 L125.2 1193.9 L134.5 1203.2 L131.9 1205.8 Z" fill="#c3c8ce" stroke="#282b30" stroke-width="0"/>
<path d="M121.5 1195.2 L124.2 1192.5 L127.5 1195 L124.3 1198.3 Z" fill="#c3c8ce"/>
<path d="M135.2 1207.2 L143.6 1215.6" stroke="#c3c8ce" stroke-width="7" stroke-linecap="round"/>
<g transform="translate(134.1,1277)" fill="#c3c8ce"><circle r="8.3"/><rect x="-2.9" y="-11.3" width="5.8" height="5.5" rx="0.8" transform="rotate(0)"/><rect x="-2.9" y="-11.3" width="5.8" height="5.5" rx="0.8" transform="rotate(45)"/><rect x="-2.9" y="-11.3" width="5.8" height="5.5" rx="0.8" transform="rotate(90)"/><rect x="-2.9" y="-11.3" width="5.8" height="5.5" rx="0.8" transform="rotate(135)"/><rect x="-2.9" y="-11.3" width="5.8" height="5.5" rx="0.8" transform="rotate(180)"/><rect x="-2.9" y="-11.3" width="5.8" height="5.5" rx="0.8" transform="rotate(225)"/><rect x="-2.9" y="-11.3" width="5.8" height="5.5" rx="0.8" transform="rotate(270)"/><rect x="-2.9" y="-11.3" width="5.8" height="5.5" rx="0.8" transform="rotate(315)"/><circle r="3.5" fill="#282b30"/></g>
<path d="M429.5 594.2 L423 600.2 L429.5 606.2" fill="none" stroke="#c3c8ce" stroke-width="3.2" stroke-linecap="round" stroke-linejoin="round"/>
<path d="M429.5 957.2 L423 963.2 L429.5 969.2" fill="none" stroke="#c3c8ce" stroke-width="3.2" stroke-linecap="round" stroke-linejoin="round"/>
<path d="M429.5 1200.7 L423 1206.7 L429.5 1212.7" fill="none" stroke="#c3c8ce" stroke-width="3.2" stroke-linecap="round" stroke-linejoin="round"/>
<path d="M420.5 1031 L426 1037.5 L431.5 1031" fill="none" stroke="#fff" stroke-width="3.2" stroke-linecap="round" stroke-linejoin="round"/>
<circle cx="253.7" cy="307.3" r="8.7" fill="#6fa236"/>
<circle cx="253.7" cy="333" r="8.7" fill="#6fa236"/>
<circle cx="253.7" cy="359.1" r="8.7" fill="#6fa236"/>
<path d="M253.6 375.9 C 256 379 260.3 382.5 260.3 387.8 C 260.3 391.3 257.5 393.8 253.9 393.8 C 250 393.8 246.9 391 246.9 387.5 C 246.9 385 248 383 249.4 382.1 C 249.9 384 250 385.5 250.9 386.8 C 251.6 387.9 253.2 388.2 254.3 387.2 C 255.2 386.3 255.1 385 254.1 383.8 C 251.8 381.3 251.2 378.5 253.6 375.9 Z" fill="#357b9b"/>
<rect x="1395.4" y="612.5" width="1.5" height="28.3" fill="#d5d9de"/>
<path d="M664.8 1199 L671.3 1205.6 L677.8 1199" fill="none" stroke="#c4cad0" stroke-width="1.5" stroke-linecap="round" stroke-linejoin="round"/>
<g fill="#7a7f85"><rect x="1162.8" y="1262.2" width="4.5" height="17"/><rect x="1172.2" y="1262.2" width="4.6" height="4.4"/><rect x="1172.2" y="1268" width="6.6" height="4.5"/><rect x="1172.2" y="1274" width="8.6" height="5"/></g>
<g fill="#4a4f55"><rect x="1622.2" y="1262.2" width="4.6" height="17"/><path d="M1635.9 1262.5 L1641.5 1268.8 L1638.1 1268.8 L1638.1 1279 L1633.9 1279 L1633.9 1268.8 L1630.5 1268.8 Z"/></g>
</svg>
</div>
</body></html>
